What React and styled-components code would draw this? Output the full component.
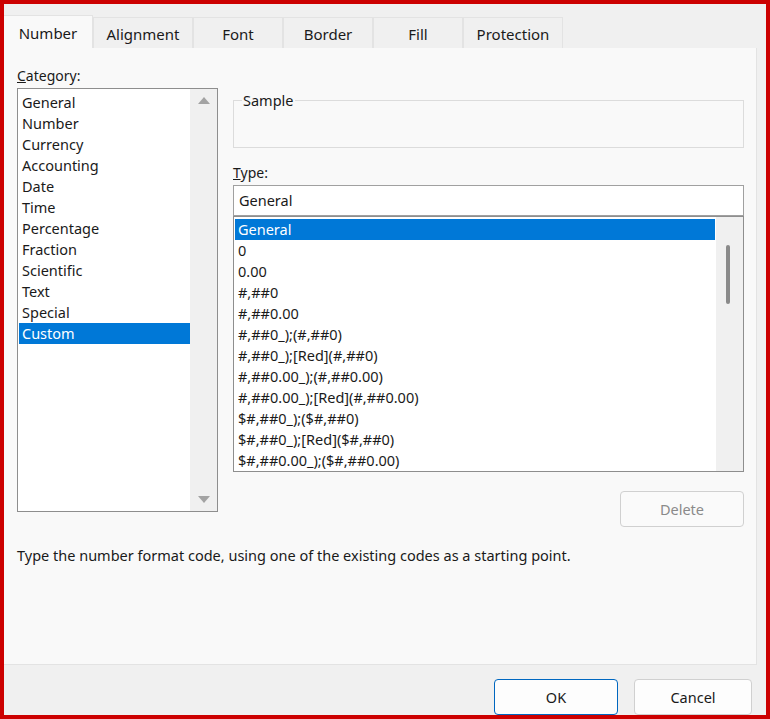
import React from "react";
import styled, { createGlobalStyle } from "styled-components";

const Global = createGlobalStyle`
  html, body { margin: 0; padding: 0; }
  body { font-family: "Noto Sans", "Open Sans", sans-serif; font-size: 14px; color: #1a1a1a; }
`;

const categories = ["General", "Number", "Currency", "Accounting", "Date", "Time", "Percentage", "Fraction", "Scientific", "Text", "Special", "Custom"];
const types = ["General", "0", "0.00", "#,##0", "#,##0.00", "#,##0_);(#,##0)", "#,##0_);[Red](#,##0)", "#,##0.00_);(#,##0.00)", "#,##0.00_);[Red](#,##0.00)", "$#,##0_);($#,##0)", "$#,##0_);[Red]($#,##0)", "$#,##0.00_);($#,##0.00)"];
const tabs = ["Number", "Alignment", "Font", "Border", "Fill", "Protection"];

const Frame = styled.div`
  width: 770px; height: 719px; box-sizing: border-box;
  border: 4px solid #cc0000; background: #f0f0f0;
  display: flex; flex-direction: column;
`;
const TabBar = styled.div`
  display: flex; padding-top: 11px; height: 33px;
`;
const Tab = styled.div`
  width: ${p => p.w}px; box-sizing: border-box;
  display: flex; align-items: center; justify-content: center;
  background: ${p => p.active ? "#f9f9f9" : "#f0f0f0"};
  border: 1px solid #e3e3e3; border-bottom: none;
  border-left: ${p => p.first ? "none" : "1px solid #e3e3e3"};
  margin-top: ${p => p.active ? "0" : "2px"};
  font-size: 15px; padding-top: 2px;
`;
const Panel = styled.div`
  height: 617px; width: 753px; box-sizing: border-box;
  background: #f9f9f9; border-right: 1px solid #e3e3e3; border-bottom: 1px solid #e3e3e3;
  padding: 18px 0 0 13px; position: relative;
`;
const Columns = styled.div`display: flex; gap: 15px;`;
const Left = styled.div`width: 201px;`;
const Right = styled.div`width: 511px; padding-top: 29px;`;
const Label = styled.div`font-size: 14px; height: 22px; u { text-decoration: underline; }`;
const ListBox = styled.div`
  display: flex; background: #fff; border: 1px solid #8e8e8e;
  height: ${p => p.h}px; box-sizing: border-box;
`;
const Items = styled.div`flex: 1; padding: ${p => p.pad}; overflow: hidden;`;
const Item = styled.div`
  height: 21px; line-height: 21px; padding-left: 3px; font-size: 14.5px;
  background: ${p => p.sel ? "#0078d7" : "transparent"};
  color: ${p => p.sel ? "#fff" : "#1a1a1a"};
`;
const Scroll = styled.div`
  width: 27px; background: #f0f0f0; position: relative;
  display: flex; flex-direction: column; justify-content: space-between; align-items: center;
  padding: 8px 0;
`;
const Arrow = styled.div`
  width: 0; height: 0; border-left: 6px solid transparent; border-right: 6px solid transparent;
  ${p => p.up ? "border-bottom: 7px solid #a3a3a3;" : "border-top: 7px solid #a3a3a3;"}
`;
const Thumb = styled.div`
  position: absolute; left: 10px; top: 28px; width: 4px; height: 59px; border-radius: 2px; background: #8a8a8a;
`;
const Fieldset = styled.fieldset`
  margin: 0; height: 53px; box-sizing: border-box; border: 1px solid #dcdcdc; padding: 0;
  legend { margin-left: 8px; padding: 0 1px; font-size: 14.5px; line-height: 10px; }
`;
const Spacer = styled.div`height: 15px;`;
const Input = styled.div`
  height: 31px; box-sizing: border-box; border: 1px solid #a0a0a0; background: #fff;
  padding-left: 5px; line-height: 29px; font-size: 14.5px;
`;
const Button = styled.div`
  width: ${p => p.w}px; height: 36px; box-sizing: border-box; border-radius: 4px;
  border: 1px solid ${p => p.primary ? "#0067c0" : "#d0d0d0"};
  background: ${p => p.disabled ? "#fafafa" : "#fdfdfd"};
  color: ${p => p.disabled ? "#8a8a8a" : "#1a1a1a"};
  display: flex; align-items: center; justify-content: center; font-size: 14.5px;
`;
const DeleteRow = styled.div`display: flex; justify-content: flex-end; margin-top: 19px;`;
const Help = styled.div`margin-top: 18px; font-size: 14.5px;`;
const Footer = styled.div`
  flex: 1; display: flex; justify-content: flex-end; align-items: flex-end; gap: 16px; padding-right: 14px;
`;

export default function App() {
  return (
    <Frame>
      <Global />
      <TabBar>
        {tabs.map((t, i) => (
          <Tab key={t} w={i === 0 ? 89 : i === 1 || i === 5 ? 100 : 90} active={i === 0} first={i === 0}>{t}</Tab>
        ))}
      </TabBar>
      <Panel>
        <Columns>
          <Left>
            <Label><u>C</u>ategory:</Label>
            <ListBox h={424}>
              <Items pad="3px 0 0 1px">
                {categories.map(c => <Item key={c} sel={c === "Custom"}>{c}</Item>)}
              </Items>
              <Scroll><Arrow up /><Arrow /></Scroll>
            </ListBox>
          </Left>
          <Right>
            <Fieldset><legend>Sample</legend></Fieldset>
            <Spacer />
            <Label><u>T</u>ype:</Label>
            <Input>General</Input>
            <ListBox h={256}>
              <Items pad="2px 1px 0 1px">
                {types.map(t => <Item key={t} sel={t === "General"}>{t}</Item>)}
              </Items>
              <Scroll><Thumb /></Scroll>
            </ListBox>
            <DeleteRow><Button w={124} disabled>Delete</Button></DeleteRow>
          </Right>
        </Columns>
        <Help>Type the number format code, using one of the existing codes as a starting point.</Help>
      </Panel>
      <Footer>
        <Button w={124} primary>OK</Button>
        <Button w={118}>Cancel</Button>
      </Footer>
    </Frame>
  );
}
